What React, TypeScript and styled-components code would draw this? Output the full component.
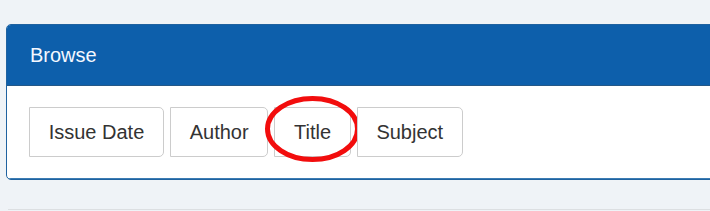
import React from "react";
import styled, { createGlobalStyle } from "styled-components";

const Global = createGlobalStyle`
  html, body { margin: 0; padding: 0; background: #eff3f7; }
  body { font-family: "Liberation Sans", Arial, sans-serif; overflow: hidden; }
`;

const Page = styled.div`
  padding: 24px 0 0 6px;
  width: 710px;
  height: 211px;
  box-sizing: border-box;
  overflow: hidden;
`;

const Panel = styled.section`
  margin-right: -20px;
  border: 1px solid #1f62a0;
  border-radius: 5px;
  background: #fff;
  overflow: hidden;
`;

const Heading = styled.header`
  background: #0d5fab;
  border-bottom: 1px solid #245887;
  display: flex;
  align-items: center;
  padding-left: 23px;
  color: #f4f8ff;
  font-size: 20px;
  box-sizing: border-box;
  height: 61px;
`;

const Body = styled.div`
  padding: 21px 22px 21px 22px;
  display: flex;
  gap: 6px;
  border-bottom: 1px solid #3b7cb3;
`;

const Button = styled.button`
  position: relative;
  height: 50px;
  padding: 0 18.7px;
  border: 1px solid #cccccc;
  border-radius: 0 5px 5px 0;
  background: #fff;
  color: #333333;
  font-family: "Liberation Sans", Arial, sans-serif;
  font-size: 20px;
  cursor: pointer;
`;

const Circle = styled.svg`
  position: absolute;
  left: -10px;
  top: -12px;
  overflow: visible;
  pointer-events: none;
`;

const NextPanel = styled.div`
  margin-top: 29px;
  margin-left: 2px;
  border-top: 1px solid #dcdfe2;
  height: 10px;
`;

export default function App() {
  const items = ["Issue Date", "Author", "Title", "Subject"];
  return (
    <>
      <Global />
      <Page>
        <Panel>
          <Heading>Browse</Heading>
          <Body>
            {items.map((t) => (
              <Button key={t}>
                {t}
                {t === "Title" && (
                  <Circle width="95" height="66" viewBox="0 0 95 66">
                    <ellipse cx="47.5" cy="33" rx="45" ry="30.5" fill="none" stroke="#f20d0d" strokeWidth="5" />
                  </Circle>
                )}
              </Button>
            ))}
          </Body>
        </Panel>
        <NextPanel />
      </Page>
    </>
  );
}
